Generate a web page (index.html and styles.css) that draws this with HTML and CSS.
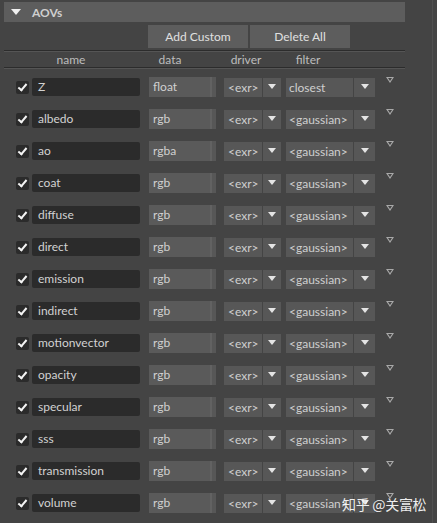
FILE: index.html
```html
<!DOCTYPE html>
<html>
<head>
<meta charset="utf-8">
<link rel="stylesheet" href="styles.css">
</head>
<body>
<div class="panel">
  <div class="frame-header">
    <span class="collapse-tri"></span>
    <span class="title">AOVs</span>
  </div>
  <div class="actions">
    <div class="btn">Add Custom</div>
    <div class="btn">Delete All</div>
  </div>
  <div class="colhead">
    <span class="h-name">name</span>
    <span class="h-data">data</span>
    <span class="h-driver">driver</span>
    <span class="h-filter">filter</span>
  </div>
  <div class="rows">
    <div class="row"><span class="check"></span><span class="name">Z</span><span class="data">float</span><span class="drop driver">&lt;exr&gt;</span><span class="arrow"></span><span class="drop filter">closest</span><span class="arrow wide"></span><span class="opt-tri"></span></div>
    <div class="row"><span class="check"></span><span class="name">albedo</span><span class="data">rgb</span><span class="drop driver">&lt;exr&gt;</span><span class="arrow"></span><span class="drop filter">&lt;gaussian&gt;</span><span class="arrow wide"></span><span class="opt-tri"></span></div>
    <div class="row"><span class="check"></span><span class="name">ao</span><span class="data">rgba</span><span class="drop driver">&lt;exr&gt;</span><span class="arrow"></span><span class="drop filter">&lt;gaussian&gt;</span><span class="arrow wide"></span><span class="opt-tri"></span></div>
    <div class="row"><span class="check"></span><span class="name">coat</span><span class="data">rgb</span><span class="drop driver">&lt;exr&gt;</span><span class="arrow"></span><span class="drop filter">&lt;gaussian&gt;</span><span class="arrow wide"></span><span class="opt-tri"></span></div>
    <div class="row"><span class="check"></span><span class="name">diffuse</span><span class="data">rgb</span><span class="drop driver">&lt;exr&gt;</span><span class="arrow"></span><span class="drop filter">&lt;gaussian&gt;</span><span class="arrow wide"></span><span class="opt-tri"></span></div>
    <div class="row"><span class="check"></span><span class="name">direct</span><span class="data">rgb</span><span class="drop driver">&lt;exr&gt;</span><span class="arrow"></span><span class="drop filter">&lt;gaussian&gt;</span><span class="arrow wide"></span><span class="opt-tri"></span></div>
    <div class="row"><span class="check"></span><span class="name">emission</span><span class="data">rgb</span><span class="drop driver">&lt;exr&gt;</span><span class="arrow"></span><span class="drop filter">&lt;gaussian&gt;</span><span class="arrow wide"></span><span class="opt-tri"></span></div>
    <div class="row"><span class="check"></span><span class="name">indirect</span><span class="data">rgb</span><span class="drop driver">&lt;exr&gt;</span><span class="arrow"></span><span class="drop filter">&lt;gaussian&gt;</span><span class="arrow wide"></span><span class="opt-tri"></span></div>
    <div class="row"><span class="check"></span><span class="name">motionvector</span><span class="data">rgb</span><span class="drop driver">&lt;exr&gt;</span><span class="arrow"></span><span class="drop filter">&lt;gaussian&gt;</span><span class="arrow wide"></span><span class="opt-tri"></span></div>
    <div class="row"><span class="check"></span><span class="name">opacity</span><span class="data">rgb</span><span class="drop driver">&lt;exr&gt;</span><span class="arrow"></span><span class="drop filter">&lt;gaussian&gt;</span><span class="arrow wide"></span><span class="opt-tri"></span></div>
    <div class="row"><span class="check"></span><span class="name">specular</span><span class="data">rgb</span><span class="drop driver">&lt;exr&gt;</span><span class="arrow"></span><span class="drop filter">&lt;gaussian&gt;</span><span class="arrow wide"></span><span class="opt-tri"></span></div>
    <div class="row"><span class="check"></span><span class="name">sss</span><span class="data">rgb</span><span class="drop driver">&lt;exr&gt;</span><span class="arrow"></span><span class="drop filter">&lt;gaussian&gt;</span><span class="arrow wide"></span><span class="opt-tri"></span></div>
    <div class="row"><span class="check"></span><span class="name">transmission</span><span class="data">rgb</span><span class="drop driver">&lt;exr&gt;</span><span class="arrow"></span><span class="drop filter">&lt;gaussian&gt;</span><span class="arrow wide"></span><span class="opt-tri"></span></div>
    <div class="row"><span class="check"></span><span class="name">volume</span><span class="data">rgb</span><span class="drop driver">&lt;exr&gt;</span><span class="arrow"></span><span class="drop filter">&lt;gaussian&gt;</span><span class="arrow wide"></span><span class="opt-tri"></span></div>
  </div>
</div>
<div class="watermark">知乎 @关富松</div>
</body>
</html>
```
FILE: styles.css
```css
html, body {
  margin: 0;
  padding: 0;
}
body {
  width: 437px;
  height: 523px;
  background: #444444;
  font-family: "Lato", "Noto Sans CJK SC", sans-serif;
  font-size: 12px;
  color: #cccccc;
  overflow: hidden;
  position: relative;
}
.panel {
  width: 433px;
  height: 523px;
  border-right: 1px solid #505050;
  padding-top: 2px;
  box-sizing: border-box;
}
.frame-header {
  margin-left: 4px;
  width: 401px;
  height: 20px;
  background: #5d5d5d;
  display: flex;
  align-items: center;
  box-sizing: border-box;
}
.collapse-tri {
  width: 0;
  height: 0;
  margin-left: 7px;
  border-left: 5.5px solid transparent;
  border-right: 5.5px solid transparent;
  border-top: 6px solid #f0f0f0;
}
.title {
  margin-left: 11px;
  font-weight: bold;
  font-size: 12px;
  color: #cfcfcf;
}
.actions {
  display: flex;
  gap: 2px;
  margin-top: 3px;
  margin-left: 148px;
}
.btn {
  width: 100px;
  height: 23px;
  background: #5d5d5d;
  color: #e0e0e0;
  display: flex;
  align-items: center;
  justify-content: center;
  font-size: 12px;
}
.colhead {
  margin-top: 2px;
  margin-left: 4px;
  width: 401px;
  height: 16px;
  border-top: 1px solid #2c2c2c;
  border-bottom: 1px solid #2c2c2c;
  box-shadow: 0 1px 0 #555555, inset 0 1px 0 #555555;
  display: grid;
  grid-template-columns: 12px 110px 88px 64px 60px;
  align-items: center;
  color: #bdbdbd;
  font-size: 12px;
}
.colhead span { text-align: center; }
.h-name { grid-column: 2; }
.h-data { grid-column: 3; }
.h-driver { grid-column: 4; }
.h-filter { grid-column: 5; }
.rows {
  margin-top: 3px;
}
.row {
  height: 32px;
  display: flex;
  align-items: center;
  padding-left: 16px;
}
.check {
  width: 13px;
  height: 13px;
  background: #2b2b2b;
  border-radius: 2px;
  position: relative;
}
.check::after {
  content: "";
  position: absolute;
  left: 4px;
  top: 1px;
  width: 3px;
  height: 7px;
  border-right: 2px solid #f4f4f4;
  border-bottom: 2px solid #f4f4f4;
  transform: rotate(40deg);
}
.name {
  margin-left: 3px;
  width: 108px;
  height: 18px;
  background: #2b2b2b;
  border-radius: 2px;
  padding-left: 6px;
  box-sizing: border-box;
  line-height: 18px;
  color: #d2d2d2;
  font-size: 12px;
}
.data {
  margin-left: 9px;
  width: 67px;
  height: 20px;
  background: linear-gradient(to right, #5a5a5a 0, #5a5a5a 61px, #626262 61px, #626262 63px, #575757 63px);
  line-height: 20px;
  padding-left: 4px;
  box-sizing: border-box;
  color: #d0d0d0;
}
.drop {
  height: 19px;
  background: #575757;
  line-height: 19px;
  box-sizing: border-box;
  color: #cfcfcf;
}
.driver {
  margin-left: 8px;
  width: 38px;
  padding-left: 4px;
}
.filter {
  margin-left: 5px;
  width: 67px;
  padding-left: 3px;
  white-space: nowrap;
  overflow: hidden;
}
.arrow {
  margin-left: 1px;
  width: 18px;
  height: 19px;
  background: #575757;
  display: flex;
  align-items: center;
  justify-content: center;
}
.arrow.wide { width: 21px; }
.arrow::after {
  content: "";
  width: 0;
  height: 0;
  border-left: 4.5px solid transparent;
  border-right: 4.5px solid transparent;
  border-top: 5px solid #e4e4e4;
  margin-top: -2px;
}
.opt-tri {
  margin-left: 11px;
  align-self: flex-start;
  margin-top: 6px;
  width: 9px;
  height: 6px;
  position: relative;
}
.opt-tri::before {
  content: "";
  position: absolute;
  left: 0;
  top: 0;
  border-left: 4.5px solid transparent;
  border-right: 4.5px solid transparent;
  border-top: 6px solid #a8a8a8;
}
.opt-tri::after {
  content: "";
  position: absolute;
  left: 2px;
  top: 1px;
  border-left: 2.5px solid transparent;
  border-right: 2.5px solid transparent;
  border-top: 3px solid #444444;
}
.watermark {
  position: absolute;
  left: 342px;
  top: 494px;
  font-family: "Noto Sans CJK SC", sans-serif;
  font-size: 14px;
  letter-spacing: -0.3px;
  color: rgba(255, 255, 255, 0.92);
  white-space: nowrap;
}
```
